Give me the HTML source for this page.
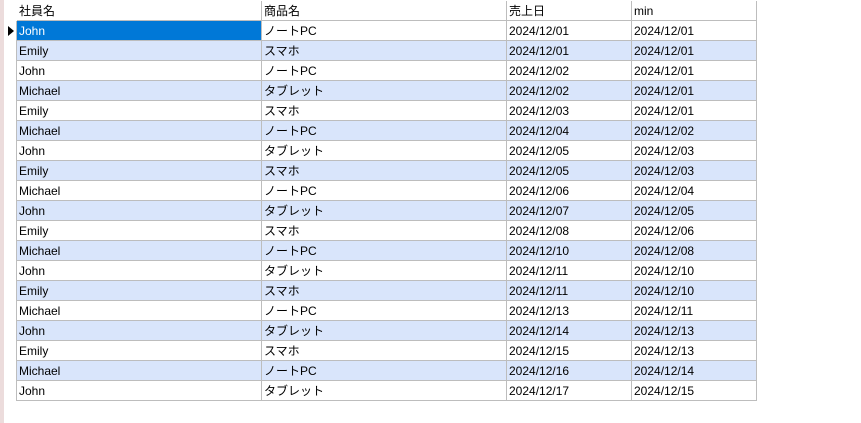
<!DOCTYPE html><html><head><meta charset="utf-8"><style>
body{margin:0;width:861px;height:423px;background:#fff;position:relative;overflow:hidden;font-family:"Liberation Sans","Noto Sans CJK JP",sans-serif;font-size:12px;color:#000}
.strip{position:absolute;left:0;top:0;width:4px;height:423px;background:#ecdcdc}
.r{position:absolute;left:4px;height:20px;width:753px}
.c{position:absolute;top:0;height:19px;line-height:21px;border-right:1px solid #bdbdbd;border-bottom:1px solid #bdbdbd;padding-left:2px;box-sizing:content-box;white-space:nowrap}
.rh{position:absolute;left:0;top:0;width:12px;height:20px;border-right:1px solid #bdbdbd}
.alt .c{background:#d9e5fb}
.sel{background:#0078d7!important;color:#fff}
.tri{position:absolute;left:4px;top:5px;width:0;height:0;border-top:5px solid transparent;border-bottom:5px solid transparent;border-left:6px solid #000}
</style></head><body><div class="strip"></div>
<div id="g"></div>
<script>
var d=[["John","ノートPC","2024/12/01","2024/12/01"],["Emily","スマホ","2024/12/01","2024/12/01"],["John","ノートPC","2024/12/02","2024/12/01"],["Michael","タブレット","2024/12/02","2024/12/01"],["Emily","スマホ","2024/12/03","2024/12/01"],["Michael","ノートPC","2024/12/04","2024/12/02"],["John","タブレット","2024/12/05","2024/12/03"],["Emily","スマホ","2024/12/05","2024/12/03"],["Michael","ノートPC","2024/12/06","2024/12/04"],["John","タブレット","2024/12/07","2024/12/05"],["Emily","スマホ","2024/12/08","2024/12/06"],["Michael","ノートPC","2024/12/10","2024/12/08"],["John","タブレット","2024/12/11","2024/12/10"],["Emily","スマホ","2024/12/11","2024/12/10"],["Michael","ノートPC","2024/12/13","2024/12/11"],["John","タブレット","2024/12/14","2024/12/13"],["Emily","スマホ","2024/12/15","2024/12/13"],["Michael","ノートPC","2024/12/16","2024/12/14"],["John","タブレット","2024/12/17","2024/12/15"]];
var L=[13,258,503,628],W=[242,242,122,122];
function row(vals,top,cls,i){var h='<div class="r '+cls+'" style="top:'+top+'px"><div class="rh">'+(i===0?'<div class="tri"></div>':'')+'</div>';
for(var k=0;k<4;k++)h+='<div class="c'+(i===0&&k===0?' sel':'')+'" style="left:'+L[k]+'px;width:'+W[k]+'px">'+vals[k]+'</div>';return h+'</div>';}
var s=row(["社員名","商品名","売上日","min"],1,"h",-1).replace('class="rh"','class="rh" style="border-right:none"');
for(var i=0;i<d.length;i++)s+=row(d[i],21+20*i,i%2?"alt":"",i);
document.getElementById("g").innerHTML=s;
</script></body></html>
